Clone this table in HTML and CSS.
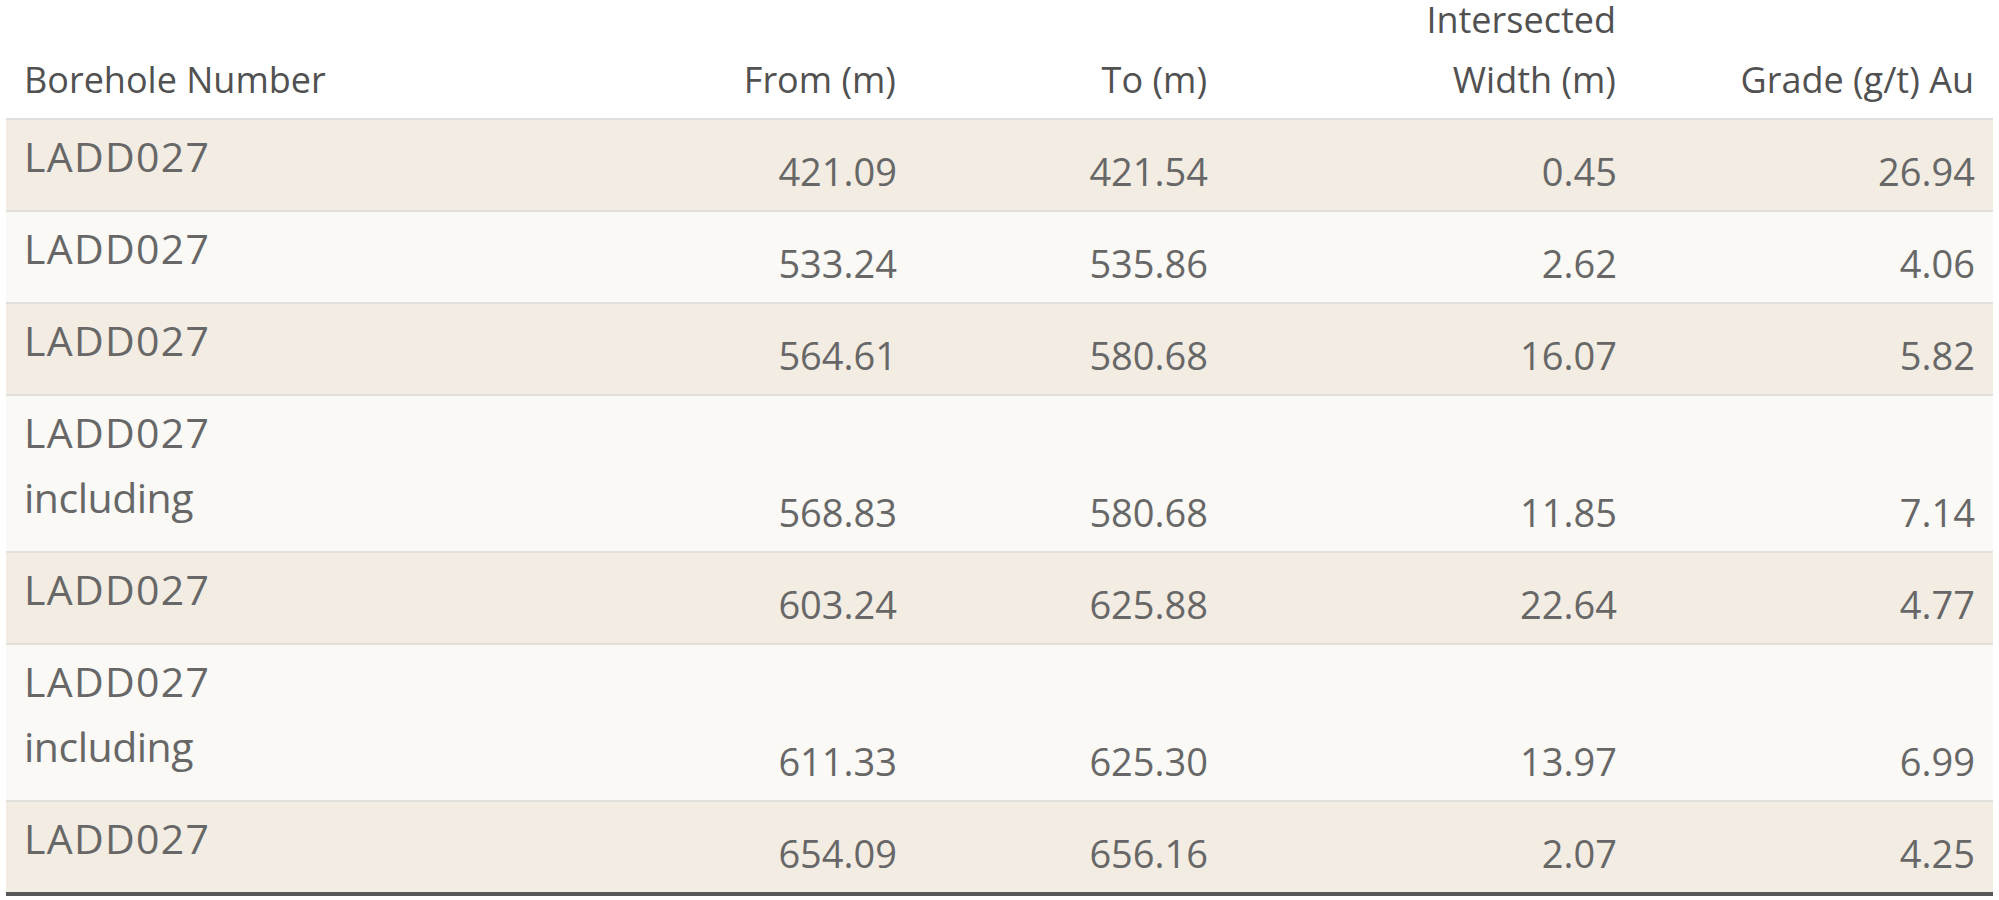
FILE: index.html
```html
<!DOCTYPE html>
<html lang="en">
<head>
<meta charset="utf-8">
<title>Drill results</title>
<link rel="stylesheet" href="styles.css">
</head>
<body>
<div class="wrap">
<table class="results">
  <colgroup>
    <col class="c-hole">
    <col class="c-from">
    <col class="c-to">
    <col class="c-width">
    <col class="c-grade">
  </colgroup>
  <thead>
    <tr>
      <th class="left">Borehole Number</th>
      <th>From (m)</th>
      <th>To (m)</th>
      <th>Intersected<br>Width (m)</th>
      <th>Grade (g/t) Au</th>
    </tr>
  </thead>
  <tbody>
    <tr class="odd">
      <td class="hole">LADD027</td><td class="num">421.09</td><td class="num">421.54</td><td class="num">0.45</td><td class="num">26.94</td>
    </tr>
    <tr class="even">
      <td class="hole">LADD027</td><td class="num">533.24</td><td class="num">535.86</td><td class="num">2.62</td><td class="num">4.06</td>
    </tr>
    <tr class="odd">
      <td class="hole">LADD027</td><td class="num">564.61</td><td class="num">580.68</td><td class="num">16.07</td><td class="num">5.82</td>
    </tr>
    <tr class="even">
      <td class="hole">LADD027<br><span class="sub">including</span></td><td class="num">568.83</td><td class="num">580.68</td><td class="num">11.85</td><td class="num">7.14</td>
    </tr>
    <tr class="odd">
      <td class="hole">LADD027</td><td class="num">603.24</td><td class="num">625.88</td><td class="num">22.64</td><td class="num">4.77</td>
    </tr>
    <tr class="even">
      <td class="hole">LADD027<br><span class="sub">including</span></td><td class="num">611.33</td><td class="num">625.30</td><td class="num">13.97</td><td class="num">6.99</td>
    </tr>
    <tr class="odd last">
      <td class="hole">LADD027</td><td class="num">654.09</td><td class="num">656.16</td><td class="num">2.07</td><td class="num">4.25</td>
    </tr>
  </tbody>
</table>
</div>
</body>
</html>
```

FILE: styles.css
```css
html, body {
  margin: 0;
  padding: 0;
  background: #ffffff;
}

body {
  font-family: "Open Sans", "Noto Sans", "Liberation Sans", sans-serif;
  overflow: hidden;
}

.wrap {
  margin-top: -10px;
  padding-left: 6px;
}

.results {
  width: 1987px;
  table-layout: fixed;
  border-collapse: collapse;
  border-spacing: 0;
}

.c-hole { width: 560px; }
.c-from { width: 349px; }
.c-to { width: 311px; }
.c-width { width: 409px; }
.c-grade { width: 358px; }

.results th {
  font-size: 36px;
  font-weight: 400;
  line-height: 60px;
  color: #515151;
  text-align: right;
  vertical-align: bottom;
  padding: 0 19px 8px 18px;
  border-bottom: 2px solid #e1dfdb;
  background: #ffffff;
}

.results th.left {
  text-align: left;
}

.results tr.odd td {
  background: #f2ece3;
}

.results tr.even td {
  background: #faf9f6;
}

.results td {
  border-bottom: 2px solid #e2e0dc;
  color: #676767;
}

.results tr.last td {
  border-bottom: 4px solid #58585a;
}

.results td.hole {
  font-size: 41px;
  line-height: 65px;
  letter-spacing: 1.3px;
  vertical-align: top;
  text-align: left;
  padding: 4px 20px 21px 18px;
}

.results td.hole .sub {
  letter-spacing: -0.5px;
}

.results td.num {
  font-size: 38px;
  line-height: 50px;
  vertical-align: bottom;
  text-align: right;
  padding: 5px 18px 14px 20px;
}
```
